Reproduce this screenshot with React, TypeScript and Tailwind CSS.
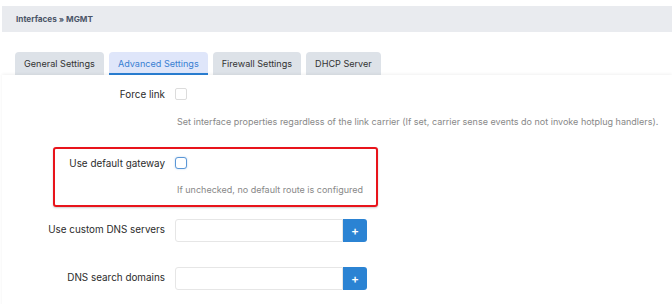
import React from 'react';

const font = { fontFamily: 'Inter, "Noto Sans", sans-serif' };

const tabs = ['General Settings', 'Advanced Settings', 'Firewall Settings', 'DHCP Server'];

function Label({ children }: { children: React.ReactNode }) {
  return <div className="w-[163px] shrink-0 text-right text-[9.9px] leading-[14px] text-[#2b2b2b]">{children}</div>;
}

function ListInput() {
  return (
    <div className="flex h-[23px]">
      <div className="w-[168px] rounded-l-[3px] border border-[#e6e6e6] bg-white" />
      <button className="flex w-[24px] items-center justify-center rounded-r-[3px] bg-[#2b83d3] text-[12px] font-semibold leading-none text-white">
        +
      </button>
    </div>
  );
}

export default function App() {
  return (
    <div className="h-[304px] w-[672px] overflow-hidden bg-white" style={font}>
      {/* breadcrumb bar */}
      <div className="pt-[6px] pl-[2px]">
        <div className="flex h-[26px] items-center bg-[#e9ebef] pl-[14px] text-[8.2px] font-bold text-[#4b5568]">
          Interfaces » MGMT
        </div>
      </div>

      {/* tabs */}
      <div className="mt-[20px] flex gap-[5px] pl-[15px]">
        {tabs.map((t) => {
          const active = t === 'Advanced Settings';
          return (
            <div
              key={t}
              className={
                active
                  ? 'flex h-[23px] items-center rounded-t-[4px] border-b-2 border-[#2a80d5] bg-[#dfe6fa] px-[9px] pt-[2px] text-[9.1px] text-[#3a80d2]'
                  : 'flex h-[23px] items-center rounded-t-[4px] bg-[#dde2e8] px-[9px] text-[9.1px] text-[#333]'
              }
            >
              {t}
            </div>
          );
        })}
      </div>

      {/* panel */}
      <div className="relative ml-[2px] h-[240px] bg-white pt-[12px] shadow-[0_-1px_3px_rgba(0,0,0,0.06)]">
        <div className="flex items-center gap-[10px]">
          <Label>Force link</Label>
          <div className="h-[12px] w-[12px] rounded-[2px] border border-[#dcdcdc] bg-white" />
        </div>
        <div className="mt-[15px] pl-[175px] text-[9px] leading-[12px] text-[#888]">
          Set interface properties regardless of the link carrier (If set, carrier sense events do not invoke hotplug handlers).
        </div>

        <div className="mt-[28px] flex items-center gap-[10px]">
          <Label>Use default gateway</Label>
          <div className="h-[12px] w-[12px] rounded-[3px] border border-[#5b97d6] bg-white shadow-[0_0_2px_rgba(60,130,210,0.35)]" />
        </div>
        <div className="mt-[14px] pl-[175px] text-[9px] leading-[12px] text-[#888]">
          If unchecked, no default route is configured
        </div>

        <div className="mt-[23px] flex items-start gap-[10px]">
          <div className="pt-[3px]">
            <Label>Use custom DNS servers</Label>
          </div>
          <ListInput />
        </div>

        <div className="mt-[25px] flex items-start gap-[10px]">
          <div className="pt-[3px]">
            <Label>DNS search domains</Label>
          </div>
          <ListInput />
        </div>

        {/* highlight annotation */}
        <div className="absolute left-[51px] top-[72px] h-[60px] w-[325px] rounded-[3px] border-2 border-[#e8141b] shadow-[0_1px_2px_rgba(0,0,0,0.2)]" />
      </div>
    </div>
  );
}
